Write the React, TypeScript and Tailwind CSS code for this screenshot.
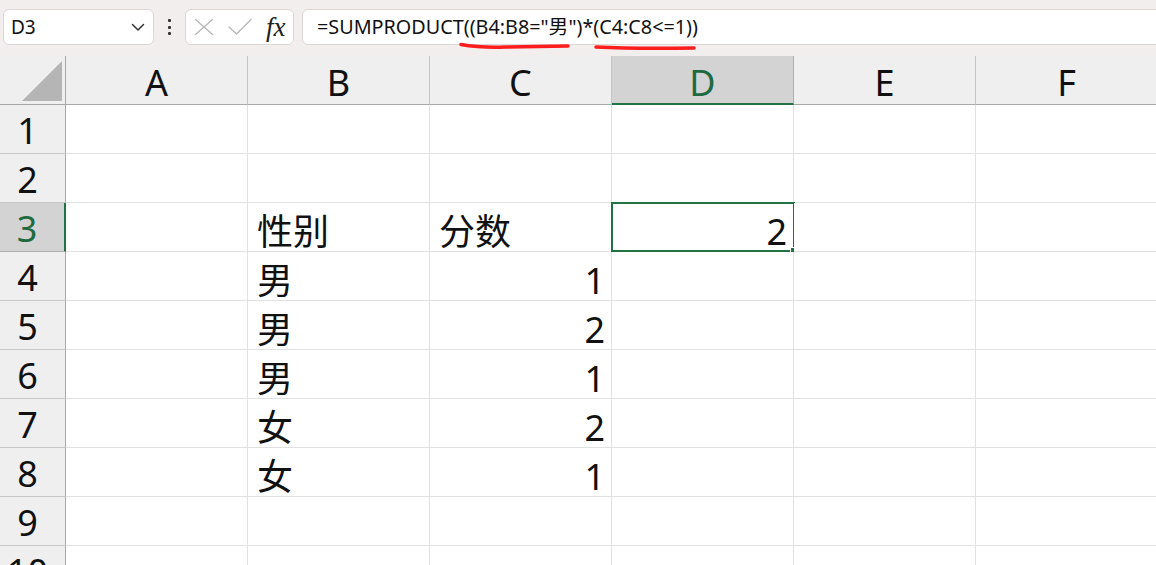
import React from "react";

const FONT = '"Noto Sans", "Noto Sans CJK SC", sans-serif';
const COLS = ["A", "B", "C", "D", "E", "F"];

type CellData = { text: string; align: "left" | "right" };
const data: Record<string, CellData> = {
  B3: { text: "性别", align: "left" },
  C3: { text: "分数", align: "left" },
  D3: { text: "2", align: "right" },
  B4: { text: "男", align: "left" },
  C4: { text: "1", align: "right" },
  B5: { text: "男", align: "left" },
  C5: { text: "2", align: "right" },
  B6: { text: "男", align: "left" },
  C6: { text: "1", align: "right" },
  B7: { text: "女", align: "left" },
  C7: { text: "2", align: "right" },
  B8: { text: "女", align: "left" },
  C8: { text: "1", align: "right" },
};

function TopBar() {
  return (
    <div className="relative h-[56px] bg-[#f3eeee] flex items-start pt-[9px] overflow-hidden">
      <div className="shrink-0 ml-[3px] w-[151px] h-[36px] bg-white rounded-[6px] border border-[#ddd6d6] flex items-center justify-between pl-[7px] pr-[6px]">
        <span className="text-[19px] text-[#111] leading-none">D3</span>
        <svg width="18" height="18" viewBox="0 0 18 18" fill="none">
          <path d="M3.5 6.5 L9 12 L14.5 6.5" stroke="#333" strokeWidth="1.5" strokeLinecap="round" strokeLinejoin="round" />
        </svg>
      </div>
      <div className="shrink-0 w-[31px] h-[36px] flex flex-col items-center justify-center gap-[3.5px]">
        <div className="w-[3px] h-[3px] bg-[#333] rounded-[1px]" />
        <div className="w-[3px] h-[3px] bg-[#333] rounded-[1px]" />
        <div className="w-[3px] h-[3px] bg-[#333] rounded-[1px]" />
      </div>
      <div className="shrink-0 w-[109px] h-[36px] bg-white rounded-[6px] border border-[#ddd6d6] flex items-center pl-[6px]">
        <svg width="22" height="18" viewBox="0 0 22 18" fill="none" className="ml-[1px]">
          <path d="M2.5 1.5 L19.5 16.5 M19.5 1.5 L2.5 16.5" stroke="#b8b8b8" strokeWidth="1.4" strokeLinecap="round" />
        </svg>
        <svg width="26" height="18" viewBox="0 0 26 18" fill="none" className="ml-[12px]">
          <path d="M2 9 L9.5 16 L24 1.5" stroke="#b8b8b8" strokeWidth="1.4" strokeLinecap="round" strokeLinejoin="round" />
        </svg>
        <span
          className="ml-[13px] text-[27px] italic text-[#222] leading-none"
          style={{ fontFamily: '"Liberation Serif", serif' }}
        >
          fx
        </span>
      </div>
      <div className="shrink-0 ml-[8px] w-[900px] h-[36px] bg-white rounded-l-[6px] border border-[#ddd6d6] flex items-center pl-[14px]">
        <span className="text-[19.8px] text-[#111] leading-none whitespace-nowrap">
          =SUMPRODUCT((B4:B8="男")*(C4:C8&lt;=1))
        </span>
      </div>
      <svg className="absolute left-0 top-0 pointer-events-none" width="1156" height="56" viewBox="0 0 1156 56" fill="none">
        <path d="M461 44.5 C 475 47, 490 47.5, 505 47 C 525 46.5, 545 46.5, 568 46" stroke="#ff1c1c" strokeWidth="3.5" strokeLinecap="round" />
        <path d="M596 47 C 625 48.5, 660 48.5, 694 48" stroke="#ff1c1c" strokeWidth="3.5" strokeLinecap="round" />
      </svg>
    </div>
  );
}

function Sheet() {
  const rows = Array.from({ length: 10 }, (_, i) => i + 1);
  return (
    <div className="grid grid-cols-[66px_repeat(6,182px)] grid-rows-[49px_repeat(10,49px)]">
      <div className="relative bg-[#efefef] border-r border-b border-[#a8a8a8]">
        <svg className="absolute right-[3px] bottom-[3px]" width="40" height="40" viewBox="0 0 40 40">
          <polygon points="40,0 40,40 0,40" fill="#b5b5b5" />
        </svg>
      </div>
      {COLS.map((c) => {
        const sel = c === "D";
        return (
          <div
            key={c}
            className={
              sel
                ? "bg-[#d3d3d3] border-r border-[#b0b0b0] border-b-2 border-b-[#217346] flex items-center justify-center pt-[7px]"
                : "bg-[#efefef] border-r border-[#c4c4c4] border-b border-b-[#a8a8a8] flex items-center justify-center pt-[6px]"
            }
          >
            <span className={sel ? "text-[36px] leading-none text-[#1e6b41]" : "text-[36px] leading-none text-[#111]"}>{c}</span>
          </div>
        );
      })}
      {rows.map((r) => (
        <React.Fragment key={r}>
          <div
            className={
              r === 3
                ? "bg-[#d3d3d3] border-r-2 border-r-[#217346] border-b border-b-[#b0b0b0] flex items-center justify-center pr-[10px] pt-[4px]"
                : "bg-[#efefef] border-r border-r-[#a8a8a8] border-b border-b-[#c8c8c8] flex items-center justify-center pr-[10px] pt-[4px]"
            }
          >
            <span className={r === 3 ? "text-[36px] leading-none text-[#1e6b41]" : "text-[36px] leading-none text-[#111]"}>{r}</span>
          </div>
          {COLS.map((c) => {
            const key = `${c}${r}`;
            const d = data[key];
            const isSel = key === "D3";
            return (
              <div
                key={key}
                className={
                  "relative bg-white border-r border-b border-[#e1e1e1] flex items-end pb-[1px] " +
                  (d && d.align === "right" ? "justify-end pr-[6px]" : "justify-start pl-[9px]")
                }
              >
                {d && <span className="text-[36px] leading-none text-[#111] whitespace-nowrap">{d.text}</span>}
                {isSel && (
                  <>
                    <div className="absolute left-[-1px] top-[-1px] right-[-2px] bottom-[-1px] border-2 border-[#217346]" />
                    <div className="absolute right-[-5px] bottom-[-4px] w-[8px] h-[8px] bg-[#217346] border border-white" />
                  </>
                )}
              </div>
            );
          })}
        </React.Fragment>
      ))}
    </div>
  );
}

export default function App() {
  return (
    <div className="w-[1156px] h-[565px] overflow-hidden bg-white" style={{ fontFamily: FONT }}>
      <TopBar />
      <Sheet />
    </div>
  );
}
